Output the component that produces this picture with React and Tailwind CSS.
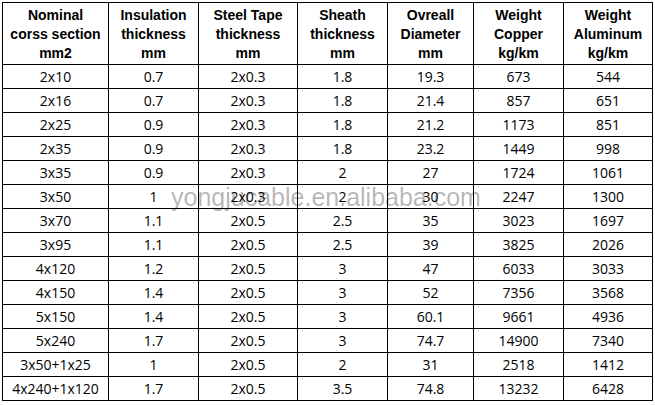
const headers = [
  ['Nominal', 'corss section', 'mm2'],
  ['Insulation', 'thickness', 'mm'],
  ['Steel Tape', 'thickness', 'mm'],
  ['Sheath', 'thickness', 'mm'],
  ['Ovreall', 'Diameter', 'mm'],
  ['Weight', 'Copper', 'kg/km'],
  ['Weight', 'Aluminum', 'kg/km'],
]

const widths = ['w-[106px]', 'w-[90px]', 'w-[99px]', 'w-[90px]', 'w-[86px]', 'w-[90px]', 'w-[89px]']

const rows = [
  ['2x10', '0.7', '2x0.3', '1.8', '19.3', '673', '544'],
  ['2x16', '0.7', '2x0.3', '1.8', '21.4', '857', '651'],
  ['2x25', '0.9', '2x0.3', '1.8', '21.2', '1173', '851'],
  ['2x35', '0.9', '2x0.3', '1.8', '23.2', '1449', '998'],
  ['3x35', '0.9', '2x0.3', '2', '27', '1724', '1061'],
  ['3x50', '1', '2x0.3', '2', '30', '2247', '1300'],
  ['3x70', '1.1', '2x0.5', '2.5', '35', '3023', '1697'],
  ['3x95', '1.1', '2x0.5', '2.5', '39', '3825', '2026'],
  ['4x120', '1.2', '2x0.5', '3', '47', '6033', '3033'],
  ['4x150', '1.4', '2x0.5', '3', '52', '7356', '3568'],
  ['5x150', '1.4', '2x0.5', '3', '60.1', '9661', '4936'],
  ['5x240', '1.7', '2x0.5', '3', '74.7', '14900', '7340'],
  ['3x50+1x25', '1', '2x0.5', '2', '31', '2518', '1412'],
  ['4x240+1x120', '1.7', '2x0.5', '3.5', '74.8', '13232', '6428'],
]

export default function App() {
  return (
    <div className="relative w-[655px] h-[405px] bg-white overflow-hidden">
      <table className="ml-[2px] mt-[2px] w-[651px] table-fixed border-collapse text-black">
        <colgroup>
          {widths.map((w, i) => (
            <col key={i} className={w} />
          ))}
        </colgroup>
        <thead>
          <tr className="h-[62px]">
            {headers.map((h, i) => (
              <th
                key={i}
                className="border border-black p-0 pt-px text-center align-middle font-bold text-[14px] leading-[19px] font-['Liberation_Sans',Arial,sans-serif]"
              >
                {h.map((line, j) => (
                  <div key={j}>{line}</div>
                ))}
              </th>
            ))}
          </tr>
        </thead>
        <tbody>
          {rows.map((r, i) => (
            <tr key={i} className="h-[24px]">
              {r.map((c, j) => (
                <td
                  key={j}
                  className="border border-black p-0 text-center align-middle text-[14px] leading-[22px] font-['Open_Sans',sans-serif]"
                >
                  {c}
                </td>
              ))}
            </tr>
          ))}
        </tbody>
      </table>

      {/* watermark */}
      <div className="pointer-events-none absolute left-[171px] top-[182px] text-[25px] leading-[30px] text-black/30 font-['Liberation_Sans',Arial,sans-serif]">
        yongjucable.en.alibaba.com
      </div>
    </div>
  )
}
